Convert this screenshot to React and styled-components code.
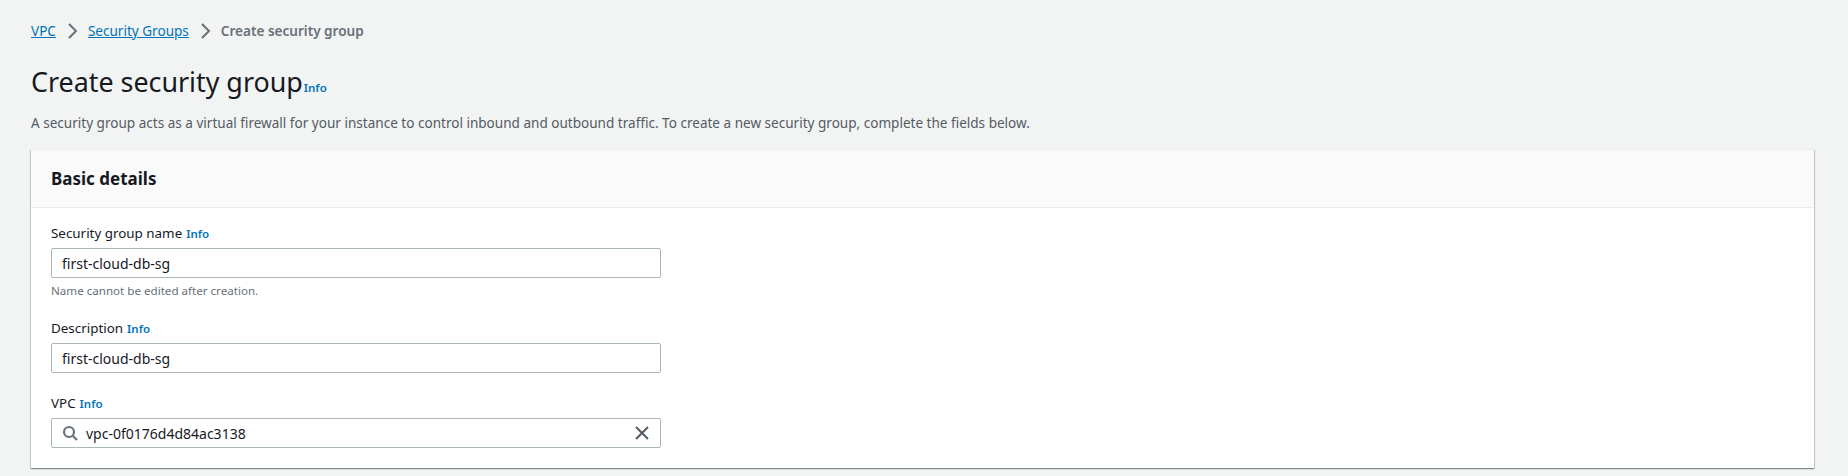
import styled, { createGlobalStyle } from "styled-components";

const GlobalStyle = createGlobalStyle`
  html, body {
    margin: 0;
    padding: 0;
    background: #f2f3f3;
  }
  body {
    font-family: "Noto Sans", "Open Sans", sans-serif;
    font-size: 14px;
    color: #16191f;
  }
`;

const Page = styled.main`
  height: 476px;
  box-sizing: border-box;
  padding: 21px 34px 0 31px;
  overflow: hidden;
`;

const Breadcrumbs = styled.nav`
  display: flex;
  align-items: center;
  height: 20px;
  font-size: 13.55px;
  line-height: 20px;
`;

const CrumbLink = styled.a`
  color: #0073bb;
  text-decoration: underline;
`;

const CrumbCurrent = styled.span`
  color: #687078;
  font-weight: 600;
`;

const CrumbArrow = styled.svg`
  width: 16px;
  height: 16px;
  margin: 0 8px;
  fill: none;
  stroke: #687078;
  stroke-width: 2;
`;

const TitleRow = styled.header`
  display: flex;
  align-items: baseline;
  margin-top: 21px;
  height: 40px;
`;

const Title = styled.h1`
  margin: 0;
  font-size: 26.85px;
  font-weight: 400;
  line-height: 40px;
  color: #16191f;
`;

const InfoLink = styled.a`
  color: #0073bb;
  font-size: 11.5px;
  font-weight: 600;
  margin-left: ${(p) => (p.$tight ? "1px" : "4px")};
`;

const Intro = styled.p`
  margin: 11px 0 0;
  font-size: 13.55px;
  line-height: 20px;
  color: #545b64;
`;

const Card = styled.section`
  margin-top: 16px;
  background: #fff;
  box-shadow: 0 1px 1px 0 rgba(0, 28, 36, 0.3), 1px 1px 1px 0 rgba(0, 28, 36, 0.15),
    -1px 1px 1px 0 rgba(0, 28, 36, 0.15);
  border-top: 1px solid #eaeded;
`;

const CardHeader = styled.div`
  display: flex;
  align-items: center;
  height: 58px;
  box-sizing: border-box;
  padding: 0 20px;
  background: #fafafa;
  border-bottom: 1px solid #eaeded;
`;

const CardTitle = styled.h2`
  margin: 0;
  font-size: 17px;
  font-weight: 700;
  line-height: 22px;
  color: #16191f;
`;

const CardBody = styled.div`
  display: flex;
  flex-direction: column;
  gap: 21px;
  padding: 16px 20px 20px;
`;

const Field = styled.div`
  width: 610px;
`;

const Label = styled.label`
  display: block;
  height: 20px;
  margin-bottom: 4px;
  font-size: 13.4px;
  line-height: 18px;
  color: #16191f;
`;

const InputBox = styled.div`
  display: flex;
  align-items: center;
  height: 30px;
  box-sizing: border-box;
  padding: 0 10px;
  background: #fff;
  border: 1px solid #aab7b8;
  border-radius: 2px;
`;

const Value = styled.span`
  flex: 1;
  padding-top: 1px;
  font-size: 14px;
  line-height: 20px;
  color: #16191f;
`;

const Hint = styled.div`
  margin: 5px 0 -1px;
  font-size: 11.6px;
  line-height: 16px;
  color: #687078;
`;

const SearchIcon = styled.svg`
  width: 16px;
  height: 16px;
  margin-right: 8px;
  fill: none;
  stroke: #687078;
  stroke-width: 2.2;
`;

const ClearIcon = styled.svg`
  width: 16px;
  height: 16px;
  fill: none;
  stroke: #545b64;
  stroke-width: 2;
`;

const Arrow = () => (
  <CrumbArrow viewBox="0 0 16 16">
    <path d="M5 1l7 7-7 7" />
  </CrumbArrow>
);

export default function App() {
  return (
    <>
      <GlobalStyle />
      <Page>
        <Breadcrumbs>
          <CrumbLink>VPC</CrumbLink>
          <Arrow />
          <CrumbLink>Security Groups</CrumbLink>
          <Arrow />
          <CrumbCurrent>Create security group</CrumbCurrent>
        </Breadcrumbs>
        <TitleRow>
          <Title>Create security group</Title>
          <InfoLink $tight>Info</InfoLink>
        </TitleRow>
        <Intro>
          A security group acts as a virtual firewall for your instance to control inbound and
          outbound traffic. To create a new security group, complete the fields below.
        </Intro>
        <Card>
          <CardHeader>
            <CardTitle>Basic details</CardTitle>
          </CardHeader>
          <CardBody>
            <Field>
              <Label>
                Security group name<InfoLink>Info</InfoLink>
              </Label>
              <InputBox>
                <Value>first-cloud-db-sg</Value>
              </InputBox>
              <Hint>Name cannot be edited after creation.</Hint>
            </Field>
            <Field>
              <Label>
                Description<InfoLink>Info</InfoLink>
              </Label>
              <InputBox>
                <Value>first-cloud-db-sg</Value>
              </InputBox>
            </Field>
            <Field>
              <Label>
                VPC<InfoLink>Info</InfoLink>
              </Label>
              <InputBox>
                <SearchIcon viewBox="0 0 16 16">
                  <circle cx="7" cy="7" r="5" />
                  <path d="M11 11l4 4" />
                </SearchIcon>
                <Value>vpc-0f0176d4d84ac3138</Value>
                <ClearIcon viewBox="0 0 16 16">
                  <path d="M2 2l12 12M14 2L2 14" />
                </ClearIcon>
              </InputBox>
            </Field>
          </CardBody>
        </Card>
      </Page>
    </>
  );
}
